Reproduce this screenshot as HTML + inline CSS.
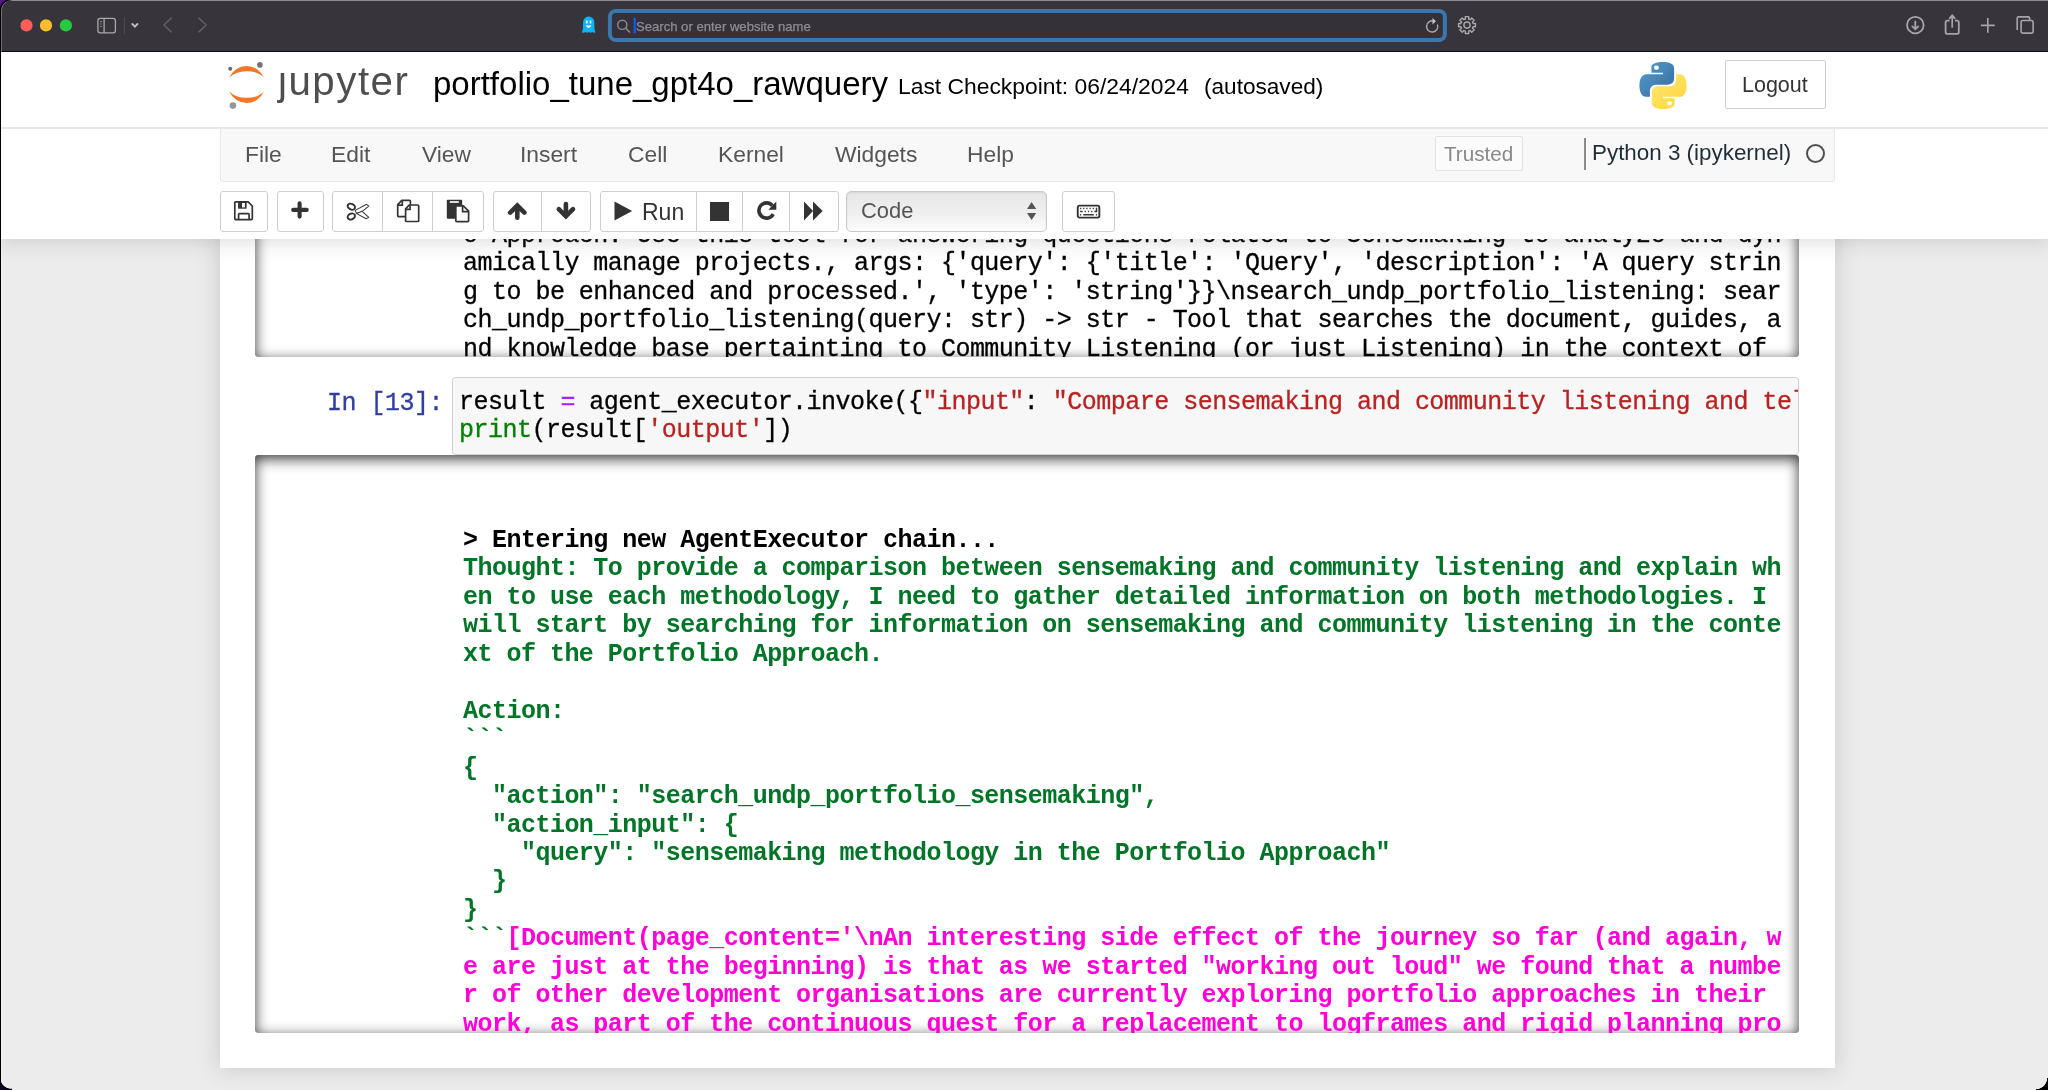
<!DOCTYPE html>
<html><head><meta charset="utf-8">
<style>
*{box-sizing:border-box}
html,body{margin:0;padding:0}
body{width:2048px;height:1090px;overflow:hidden;position:relative;background:#ececec;font-family:"Liberation Sans",sans-serif}
.abs{position:absolute}
.t,pre{will-change:transform}
/* safari */
#safari{left:0;top:0;width:2048px;height:52px;background:#37353b;border-top:1px solid #8e8c91;z-index:10}
#safari .bl{position:absolute;left:0;top:50px;width:2048px;height:1px;background:#0c0c0d}
/* header */
#header{left:0;top:0;width:2048px;height:239px;background:#fff;box-shadow:0 0 20px 1.7px rgba(87,87,87,.22);z-index:5}
#hdrline{left:0;top:75px;width:2048px;height:1px;background:#e3e3e3}
.t{position:absolute;white-space:pre;line-height:1}
#menubar{left:220px;top:128.6px;width:1615px;height:53.4px;background:#f8f8f8;border:1px solid #e7e7e7;border-top:none;border-radius:0 0 3px 3px}
.menu{font-size:22.8px;color:#555}
.btn{position:absolute;top:191px;height:41px;border:1px solid #cfcfcf;border-radius:3px;background:#fff}
.div{position:absolute;top:0;width:1px;height:39px;background:#cfcfcf}
/* notebook */
#nb{left:220px;top:200px;width:1615px;height:868px;background:#fff;box-shadow:0 0 20px 1.7px rgba(87,87,87,.2)}
.oscroll{position:absolute;left:255px;width:1544px;border-radius:3.4px;box-shadow:inset 0 3.4px 13.6px rgba(0,0,0,.8);overflow:hidden;background:transparent}
pre{margin:0;font-family:"Liberation Mono",monospace;font-size:25px;letter-spacing:-0.52px;line-height:28.45px;white-space:pre}
.g{color:#007427;font-weight:bold}
.p{color:#ff00d7;font-weight:bold}
.b{font-weight:bold;color:#000}
</style></head><body>

<div id="safari" class="abs">
  <div class="bl"></div>
  <svg class="abs" style="left:0;top:-1px" width="2048" height="52" viewBox="0 0 2048 52">
    <circle cx="26.5" cy="25.4" r="6.1" fill="#fe5f57"/>
    <circle cx="46" cy="25.4" r="6.1" fill="#febc2e"/>
    <circle cx="65.9" cy="25.4" r="6.1" fill="#28c840"/>
    <rect x="97.9" y="18.3" width="17.5" height="14.6" rx="2.4" fill="none" stroke="#a9a8ab" stroke-width="1.3"/>
    <path d="M104.1 18.3V32.9" stroke="#a9a8ab" stroke-width="1.3"/>
    <path d="M100.2 21.6h1.6M100.2 24h1.6M100.2 26.5h1.6" stroke="#8a898d" stroke-width="1.1"/>
    <path d="M124.5 17V34" stroke="#4d4b51" stroke-width="1"/>
    <path d="M132.3 24L134.9 26.6L137.5 24" fill="none" stroke="#bebdc1" stroke-width="1.9" stroke-linecap="round"/>
    <path d="M171.2 18.2L163.9 25L171.2 31.8" fill="none" stroke="#5f5d63" stroke-width="1.6" stroke-linecap="round" stroke-linejoin="round"/>
    <path d="M198.9 18.2L206.2 25L198.9 31.8" fill="none" stroke="#5f5d63" stroke-width="1.6" stroke-linecap="round" stroke-linejoin="round"/>
    <!-- ghost -->
    <path d="M583.1 22.1A5.6 5.6 0 0 1 594.3 22.1L594.5 29Q594.8 31.3 595.6 32.2Q593.8 33.2 592.3 31.9Q590.6 33.4 588.9 31.9Q587.2 33.4 585.5 31.9Q583.9 33.2 581.6 32.2Q582.7 31.3 582.9 29Z" fill="#0bb4f2"/>
    <ellipse cx="586.8" cy="22" rx="0.95" ry="1.65" fill="#fff"/><ellipse cx="590.5" cy="22" rx="0.95" ry="1.65" fill="#fff"/>
    <path d="M585.9 25.1Q588.6 25.9 591.3 25.1Q590.9 27.9 588.6 27.9Q586.3 27.9 585.9 25.1Z" fill="#e6f7ff"/>
    <!-- url field -->
    <rect x="609.9" y="11" width="835" height="29" rx="6" fill="#343238" stroke="#3877b0" stroke-width="4"/>
    <circle cx="622.3" cy="24.8" r="4.6" fill="none" stroke="#8e8c91" stroke-width="1.4"/>
    <path d="M625.7 28.2L629.5 32" stroke="#8e8c91" stroke-width="1.6" stroke-linecap="round"/>
    <rect x="633.6" y="17.8" width="2.2" height="15.4" fill="#0b5eff"/>
    <!-- reload -->
    <path d="M1437.4 24.5A5.6 5.6 0 1 1 1433.8 21.1" fill="none" stroke="#a9a8ab" stroke-width="1.4"/>
    <path d="M1432.5 18L1435.9 21.3L1432.5 24.5Z" fill="#c9c8cb"/>
    <!-- gear -->
    <g transform="translate(1467 25.1)" fill="none" stroke="#a9a8ab" stroke-width="1.4">
      <path d="M-1.62 -6.09 L-1.71 -8.43 L1.71 -8.43 L1.62 -6.09 L3.16 -5.45 L4.75 -7.17 L7.17 -4.75 L5.45 -3.16 L6.09 -1.62 L8.43 -1.71 L8.43 1.71 L6.09 1.62 L5.45 3.16 L7.17 4.75 L4.75 7.17 L3.16 5.45 L1.62 6.09 L1.71 8.43 L-1.71 8.43 L-1.62 6.09 L-3.16 5.45 L-4.75 7.17 L-7.17 4.75 L-5.45 3.16 L-6.09 1.62 L-8.43 1.71 L-8.43 -1.71 L-6.09 -1.62 L-5.45 -3.16 L-7.17 -4.75 L-4.75 -7.17 L-3.16 -5.45Z" stroke-linejoin="round"/>
      <circle r="3.1"/>
    </g>
    <!-- right icons -->
    <circle cx="1915.3" cy="25.1" r="8.3" fill="none" stroke="#a6a5a9" stroke-width="1.8"/>
    <path d="M1915.3 21.4V29M1912.4 26.4L1915.3 29.3L1918.2 26.4" fill="none" stroke="#a6a5a9" stroke-width="1.8" stroke-linecap="round"/>
    <path d="M1949.6 20.6H1947.2Q1945.6 20.6 1945.6 22.2V32.2Q1945.6 33.8 1947.2 33.8H1957.2Q1958.8 33.8 1958.8 32.2V22.2Q1958.8 20.6 1957.2 20.6H1954.9" fill="none" stroke="#a6a5a9" stroke-width="1.8"/>
    <path d="M1952.2 27V15.6M1949.6 18.4L1952.2 15.4L1954.8 18.4" fill="none" stroke="#a6a5a9" stroke-width="1.7" stroke-linecap="round"/>
    <path d="M1987.8 18.1V32.8M1980.9 25.4H1994.7" stroke="#a6a5a9" stroke-width="1.6"/>
    <path d="M2017.2 30V18.3Q2017.2 16.9 2018.6 16.9H2028.2Q2029.6 16.9 2029.6 18.3V20.2" fill="none" stroke="#a6a5a9" stroke-width="1.6"/>
    <rect x="2021.1" y="20.5" width="12" height="12.6" rx="1.6" fill="#37353b" stroke="#a6a5a9" stroke-width="1.6"/>
  </svg>
  <div class="t" style="left:636px;top:18.5px;font-size:13.1px;color:#8f8d92;-webkit-text-stroke:0.25px #8f8d92">Search or enter website name</div>
</div>

<div id="nb" class="abs"></div>

<!-- output scroll 1 -->
<div class="oscroll" style="top:200px;height:157px">
<pre class="abs" style="left:208px;top:21.5px;color:#000;-webkit-text-stroke-width:0.3px">o Approach. Use this tool for answering questions related to Sensemaking to analyze and dyn
amically manage projects., args: {'query': {'title': 'Query', 'description': 'A query strin
g to be enhanced and processed.', 'type': 'string'}}\nsearch_undp_portfolio_listening: sear
ch_undp_portfolio_listening(query: str) -&gt; str - Tool that searches the document, guides, a
nd knowledge base pertainting to Community Listening (or just Listening) in the context of </pre>
</div>

<!-- input cell -->
<div class="t" style="left:327px;top:391px;font-family:'Liberation Mono';font-size:25px;letter-spacing:-0.52px;color:#303f9f;-webkit-text-stroke-width:0.3px">In [13]:</div>
<div class="abs" style="left:452px;top:377px;width:1347px;height:78px;background:#f7f7f7;border:1px solid #cfcfcf;border-radius:3.4px;overflow:hidden">
<pre class="abs" style="left:6px;top:11.3px;color:#000;-webkit-text-stroke-width:0.3px">result <span style="color:#aa22ff">=</span> agent_executor.invoke({<span style="color:#ba2121">"input"</span>: <span style="color:#ba2121">"Compare sensemaking and community listening and tell me when to use each"</span>})
<span style="color:#008000">print</span>(result[<span style="color:#ba2121">'output'</span>])</pre>
</div>

<!-- output scroll 2 -->
<div class="oscroll" style="top:455px;height:577.5px">
<pre class="abs" style="left:208px;top:71.8px;color:#000"><span class="b">&gt; Entering new AgentExecutor chain...</span>
<span class="g">Thought: To provide a comparison between sensemaking and community listening and explain wh
en to use each methodology, I need to gather detailed information on both methodologies. I
will start by searching for information on sensemaking and community listening in the conte
xt of the Portfolio Approach.

Action:
```
{
  "action": "search_undp_portfolio_sensemaking",
  "action_input": {
    "query": "sensemaking methodology in the Portfolio Approach"
  }
}
```</span><span class="p">[Document(page_content='\nAn interesting side effect of the journey so far (and again, w
e are just at the beginning) is that as we started "working out loud" we found that a numbe
r of other development organisations are currently exploring portfolio approaches in their
work, as part of the continuous quest for a replacement to logframes and rigid planning pro
cesses</span></pre>
</div>

<!-- header -->
<div id="header" class="abs">
  <div class="abs" style="left:0;top:126.8px;width:2048px;height:1.8px;background:#e6e6e6"></div>
  <div id="menubar" class="abs"></div>
  <!-- logo -->
  <svg class="abs" style="left:222px;top:60px" width="50" height="52" viewBox="222 60 50 52">
    <path d="M229.3 77.8A18.6 18.6 0 0 1 263.9 77.8A19.8 12.9 0 0 0 229.3 77.8Z" fill="#f37726"/>
    <path d="M229.3 91.2A18.6 18.6 0 0 0 263.9 91.2A19.8 12.9 0 0 1 229.3 91.2Z" fill="#f37726"/>
    <circle cx="230.2" cy="68.65" r="2" fill="#6a6a6a"/>
    <circle cx="259.9" cy="64.9" r="2.8" fill="#737373"/>
    <circle cx="232.9" cy="105.6" r="3.3" fill="#979797"/>
  </svg>
  <div class="t" style="left:277.5px;top:61.5px;font-size:40.3px;color:#4e4e4e;letter-spacing:1.5px">&#x237;upyter</div>
  <div class="t" style="left:432.6px;top:67.4px;font-size:33px;color:#000">portfolio_tune_gpt4o_rawquery</div>
  <div class="t" style="left:897.5px;top:75.4px;font-size:22.85px;color:#000">Last Checkpoint: 06/24/2024</div>
  <div class="t" style="left:1204px;top:75.6px;font-size:22.6px;color:#000">(autosaved)</div>
  <!-- python logo -->
  <svg class="abs" style="left:1639px;top:61px" width="48" height="49" viewBox="0 0 110 110">
    <defs>
      <linearGradient id="pb" x1="0" y1="0" x2="1" y2="1"><stop offset="0" stop-color="#5a9fd4"/><stop offset="1" stop-color="#306998"/></linearGradient>
      <linearGradient id="py" x1="0" y1="0" x2="1" y2="1"><stop offset="0" stop-color="#ffe873"/><stop offset="1" stop-color="#ffd43b"/></linearGradient>
    </defs>
    <path d="M54.5 1C27 1 28.5 13 28.5 13V25.5H55V29H18C18 29 1 27 1 54.5S16 81 16 81H25V68S24.5 53 40 53H66S80.5 53 80.5 39V15S82.5 1 54.5 1ZM40 9.5A4.8 4.8 0 1 1 40 19A4.8 4.8 0 1 1 40 9.5Z" fill="url(#pb)"/>
    <path d="M55.5 109C83 109 81.5 97 81.5 97V84.5H55V81H92C92 81 109 83 109 55.5S94 29 94 29H85V42S85.5 57 70 57H44S29.5 57 29.5 71V95S27.5 109 55.5 109ZM70 100.5A4.8 4.8 0 1 1 70 91A4.8 4.8 0 1 1 70 100.5Z" fill="url(#py)"/>
  </svg>
  <div class="abs" style="left:1725px;top:60px;width:101px;height:49px;border:1px solid #cfcfcf;border-radius:2px;background:#fff"></div>
  <div class="t" style="left:1741.7px;top:74.6px;font-size:21.5px;color:#333">Logout</div>
  <!-- menu -->
  <div class="t menu" style="left:244.5px;top:142.7px">File</div>
  <div class="t menu" style="left:331px;top:142.7px">Edit</div>
  <div class="t menu" style="left:422px;top:142.7px">View</div>
  <div class="t menu" style="left:519.5px;top:142.7px">Insert</div>
  <div class="t menu" style="left:628.3px;top:142.7px">Cell</div>
  <div class="t menu" style="left:717.5px;top:142.7px">Kernel</div>
  <div class="t menu" style="left:834.5px;top:142.7px">Widgets</div>
  <div class="t menu" style="left:966.5px;top:142.7px">Help</div>
  <div class="abs" style="left:1435px;top:135.5px;width:88px;height:35px;border:1px solid #e3e3e3;border-radius:2px;background:#fbfbfb"></div>
  <div class="t" style="left:1443.7px;top:143.5px;font-size:20.7px;color:#888">Trusted</div>
  <div class="abs" style="left:1584.1px;top:138.2px;width:1.8px;height:31.6px;background:#8a8a8a"></div>
  <div class="t" style="left:1592.3px;top:142px;font-size:22.4px;color:#1d2e39">Python 3 (ipykernel)</div>
  <div class="abs" style="left:1805.5px;top:144.2px;width:19.2px;height:19.2px;border:2.9px solid #505050;border-radius:50%"></div>

  <!-- toolbar -->
  <div class="btn" style="left:220px;top:191px;width:48px"></div>
  <svg class="abs" style="left:233px;top:200px" width="22" height="22" viewBox="0 0 22 22">
    <path d="M2.8 1.9H15.2L19.3 6V18.6Q19.3 19.6 18.3 19.6H2.8Q1.8 19.6 1.8 18.6V2.9Q1.8 1.9 2.8 1.9Z" fill="none" stroke="#333" stroke-width="1.7" stroke-linejoin="round"/>
    <rect x="5.1" y="2" width="8.5" height="6.7" fill="#333"/><rect x="9" y="3" width="2.9" height="4.4" fill="#fff"/>
    <path d="M5.6 19.6V14.4Q5.6 13.6 6.4 13.6H15.3Q16.1 13.6 16.1 14.4V19.6" fill="none" stroke="#333" stroke-width="1.7"/>
  </svg>
  <div class="btn" style="left:277px;top:191px;width:47px"></div>
  <svg class="abs" style="left:290px;top:200px" width="20" height="20" viewBox="0 0 20 20">
    <path d="M9.6 3.2V16.6M3.2 9.9H16.7" stroke="#333" stroke-width="4.1" stroke-linecap="round"/>
  </svg>
  <div class="btn" style="left:332px;top:191px;width:152px"><div class="div" style="left:48.5px"></div><div class="div" style="left:98.5px"></div></div>
  <svg class="abs" style="left:344px;top:200px" width="28" height="24" viewBox="0 0 28 24">
    <path d="M11.2 10.4L22.6 4.3L24.8 6.1L18.2 11.3L12.6 13.6Z M12.2 13.4L18.2 11.3L24.8 17.4L22.1 18.7Z" fill="#fff" stroke="#3a3a3a" stroke-width="1.05" stroke-linejoin="round"/>
    <ellipse cx="7.3" cy="6.65" rx="3.85" ry="2.85" transform="rotate(25 7.3 6.65)" fill="none" stroke="#333" stroke-width="1.9"/>
    <ellipse cx="7.3" cy="16.55" rx="3.85" ry="2.85" transform="rotate(-25 7.3 16.55)" fill="none" stroke="#333" stroke-width="1.9"/>
  </svg>
  <svg class="abs" style="left:396px;top:199px" width="24" height="24" viewBox="0 0 24 24">
    <path d="M1.7 5.6L5.8 1.3H13.3Q14.4 1.3 14.4 2.4V16.7Q14.4 17.6 13.5 17.6H2.6Q1.7 17.6 1.7 16.7Z" fill="#fff" stroke="#333" stroke-width="1.7" stroke-linejoin="round"/>
    <path d="M1.7 6.2H6.3V1.6" fill="none" stroke="#333" stroke-width="1.7"/>
    <path d="M9.6 9.9L13.2 6H21.6Q22.7 6 22.7 7.1V21.5Q22.7 22.5 21.6 22.5H10.7Q9.6 22.5 9.6 21.5Z" fill="#fff" stroke="#333" stroke-width="1.7" stroke-linejoin="round"/>
    <path d="M9.6 10.4H14V6.3" fill="none" stroke="#333" stroke-width="1.7"/>
  </svg>
  <svg class="abs" style="left:446px;top:199px" width="24" height="24" viewBox="0 0 24 24">
    <rect x="0.8" y="0.8" width="15.4" height="19" rx="1" fill="#333"/>
    <rect x="3.8" y="2" width="9" height="2" fill="#ddd"/>
    <path d="M9.8 6.8H17.3L22.6 12.1V21.6Q22.6 22.6 21.6 22.6H10.8Q9.8 22.6 9.8 21.6Z" fill="#fff" stroke="#333" stroke-width="1.7" stroke-linejoin="round"/>
    <path d="M16.6 7V12.6H22.4" fill="none" stroke="#333" stroke-width="1.7"/>
  </svg>
  <div class="btn" style="left:493px;top:191px;width:98px"><div class="div" style="left:46.5px"></div></div>
  <svg class="abs" style="left:505px;top:199px" width="24" height="24" viewBox="0 0 24 24">
    <path d="M12.3 18.8V8M5.2 13.6L12.3 6.5L19.4 13.6" fill="none" stroke="#333" stroke-width="4.6" stroke-linecap="round" stroke-linejoin="miter" stroke-miterlimit="10"/>
  </svg>
  <svg class="abs" style="left:554px;top:199px" width="24" height="24" viewBox="0 0 24 24">
    <path d="M11.9 5V14M4.8 10.2L11.9 17.3L19 10.2" fill="none" stroke="#333" stroke-width="4.6" stroke-linecap="round" stroke-linejoin="miter" stroke-miterlimit="10"/>
  </svg>
  <div class="btn" style="left:600px;top:191px;width:239px"><div class="div" style="left:94.5px"></div><div class="div" style="left:140.5px"></div><div class="div" style="left:187.5px"></div></div>
  <svg class="abs" style="left:614px;top:201px" width="20" height="20" viewBox="0 0 20 20"><path d="M0.5 0.5L18.2 10L0.5 19.4Z" fill="#333"/></svg>
  <div class="t" style="left:641.7px;top:200.6px;font-size:23px;color:#333">Run</div>
  <div class="abs" style="left:710.4px;top:201.5px;width:19px;height:19px;background:#333"></div>
  <svg class="abs" style="left:756px;top:200px" width="22" height="22" viewBox="0 0 22 22">
    <path d="M17.2 14.1A7.6 7.6 0 1 1 16.3 5.6" fill="none" stroke="#333" stroke-width="3.6"/>
    <path d="M20.3 1.5V9.7H12.3Z" fill="#333"/>
  </svg>
  <svg class="abs" style="left:803px;top:201px" width="22" height="20" viewBox="0 0 22 20"><path d="M1 0.5L10 10L1 19.4Z M10 0.5L19.7 10L10 19.4Z" fill="#333"/></svg>
  <div class="abs" style="left:846px;top:190.5px;width:201px;height:41px;border:1px solid #c9c9c9;border-radius:5px;background:linear-gradient(#e7e7e7,#f0f0f0 60%,#fcfcfc);box-shadow:inset 0 1px 2px rgba(0,0,0,.08)"></div>
  <div class="t" style="left:860.5px;top:200px;font-size:21.9px;color:#555">Code</div>
  <svg class="abs" style="left:1026px;top:201px" width="12" height="20" viewBox="0 0 12 20"><path d="M1 7.9L5.6 1.1L10.2 7.9Z M1 12L5.6 18.9L10.2 12Z" fill="#555"/></svg>
  <div class="btn" style="left:1062px;top:191px;width:53px"></div>
  <svg class="abs" style="left:1076px;top:204px" width="26" height="16" viewBox="0 0 26 16">
    <rect x="1.75" y="1.65" width="21.6" height="12" rx="1.8" fill="none" stroke="#333" stroke-width="1.9"/>
    <path d="M3.95 4.5h1.3M7.15 4.5h1.3M10.25 4.5h1.3M13.45 4.5h1.3M16.65 4.5h1.3M4.1 7.6h2.6M8.65 7.6h1.3M11.85 7.6h1.3M15.05 7.6h1.3M18.4 7.6h2.1V3.8M3.9 10.8h1.3M7.2 10.8H17.8M19.85 10.8h1.3" fill="none" stroke="#3a3a3a" stroke-width="1.5"/>
  </svg>
</div>

<div class="abs" style="left:0;top:0;width:2060px;height:1100px;border-radius:11px;box-shadow:inset 1px 0 0 #000,inset 2px 0 0 rgba(255,255,255,.3);z-index:30;pointer-events:none"></div>
<div class="abs" style="left:0;top:0;width:12px;height:12px;background:radial-gradient(circle at 11px 11px,transparent 10.3px,#000 11px,#521487 12.5px);z-index:31"></div>
<div class="abs" style="left:0;top:1078px;width:12px;height:12px;background:radial-gradient(circle at 11px 0px,transparent 10.3px,#000 11px,#10002a 12.5px);z-index:31"></div>
<div class="abs" style="left:2036px;top:1078px;width:12px;height:12px;background:radial-gradient(circle at 0px 0px,transparent 10.8px,#000 11.5px);z-index:31"></div>
</body></html>
